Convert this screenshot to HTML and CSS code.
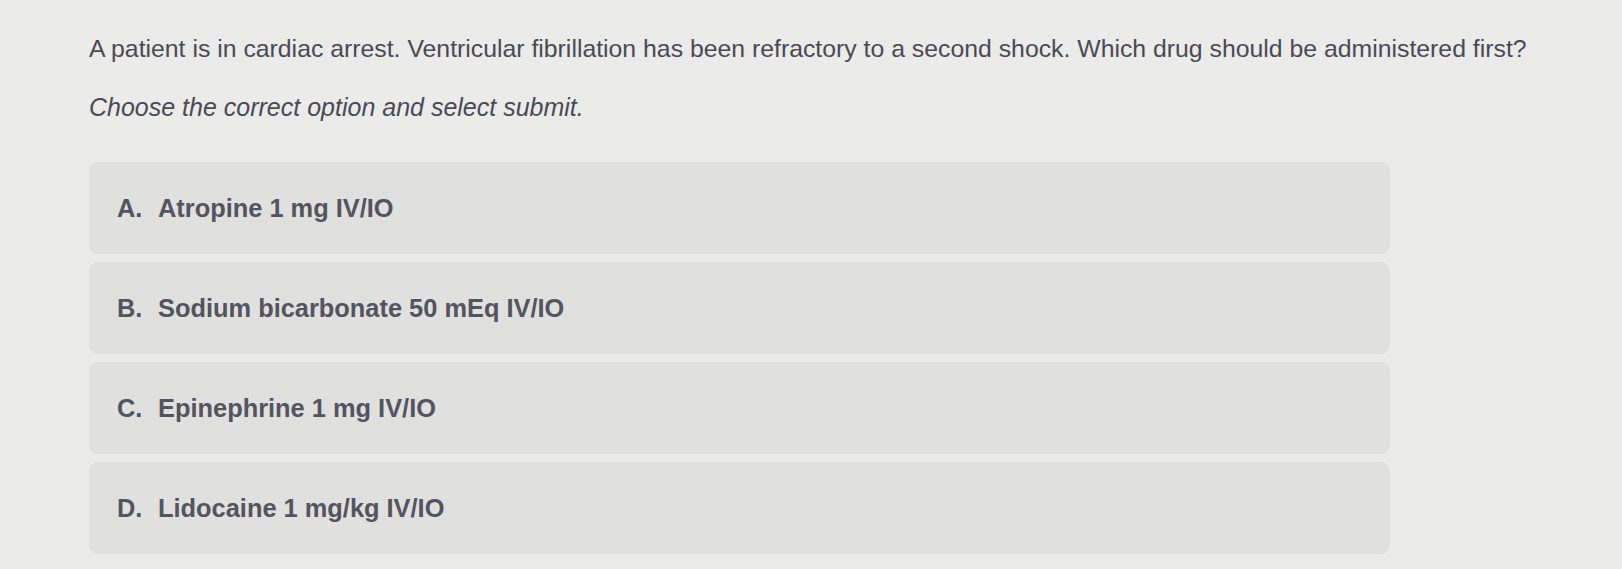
FILE: index.html
```html
<!DOCTYPE html>
<html lang="en">
<head>
    <meta charset="UTF-8">
    <title>Question</title>
    <link rel="stylesheet" href="styles.css">
</head>
<body>
    <div class="question-container">
        <p class="question">A patient is in cardiac arrest. Ventricular fibrillation has been refractory to a second shock. Which drug should be administered first?</p>
        <p class="instruction">Choose the correct option and select submit.</p>

        <div class="options">
            <div class="option"><span class="letter">A.</span> Atropine 1 mg IV/IO</div>
            <div class="option"><span class="letter">B.</span> Sodium bicarbonate 50 mEq IV/IO</div>
            <div class="option"><span class="letter">C.</span> Epinephrine 1 mg IV/IO</div>
            <div class="option"><span class="letter">D.</span> Lidocaine 1 mg/kg IV/IO</div>
        </div>
    </div>
</body>
</html>
```

FILE: styles.css
```css
body {
    font-family: "Liberation Sans", Arial, sans-serif;
    background-color: #ebebe9;
    color: #4a4a56;
    margin: 0;
}

.question-container {
    padding: 34px 0 0 89px;
    width: 1301px;
}

.question {
    font-size: 24.8px;
    line-height: 30px;
    margin: 0;
    white-space: nowrap;
}

.instruction {
    font-size: 25px;
    line-height: 30px;
    font-style: italic;
    margin: 28px 0 0 0;
}

.options {
    display: flex;
    flex-direction: column;
    gap: 8px;
    margin-top: 40px;
}

.option {
    background: #e0e0de;
    border-radius: 9px;
    height: 92px;
    display: flex;
    align-items: center;
    padding-left: 28px;
    font-size: 25.4px;
    font-weight: bold;
    color: #545460;
}

.letter {
    display: inline-block;
    width: 41px;
}
```
